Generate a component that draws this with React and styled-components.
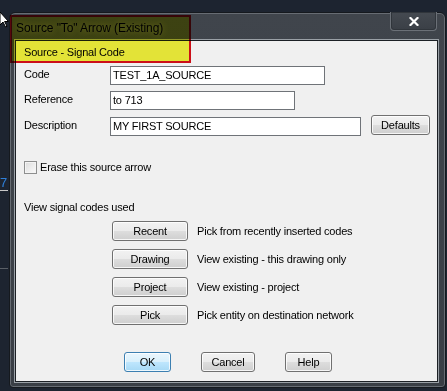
import React from 'react'
import styled, { createGlobalStyle, css } from 'styled-components'

const GlobalStyle = createGlobalStyle`
  html, body {
    margin: 0;
    padding: 0;
    background: #1d2430;
  }
  body {
    font-family: "Liberation Sans", Arial, sans-serif;
    font-size: 11px;
    letter-spacing: -0.2px;
    color: #000;
  }
`

const Page = styled.div`
  position: relative;
  width: 447px;
  height: 391px;
  overflow: hidden;
  padding: 12px 1px 0 9px;
  box-sizing: border-box;
`

const Window = styled.div`
  position: relative;
  height: 374px;
  display: flex;
  flex-direction: column;
  background: linear-gradient(#40454c, #393e45);
  border: 1px solid #15191e;
  border-radius: 6px 6px 4px 4px;
  box-shadow: inset 0 0 0 1px #676c73;
`

const TitleBar = styled.div`
  height: 27px;
  display: flex;
  align-items: flex-start;
  justify-content: space-between;
`

const Caption = styled.div`
  font-size: 12px;
  letter-spacing: -0.1px;
  padding: 8px 0 0 6px;
  text-shadow: 0 0 6px rgba(255, 255, 230, 0.35);
`

const CloseButton = styled.div`
  width: 45px;
  height: 18px;
  margin: -1px 8px 0 0;
  display: flex;
  align-items: center;
  justify-content: center;
  border: 1px solid #6b7077;
  border-top: 0;
  border-radius: 0 0 4px 4px;
  background: linear-gradient(#454a51, #3a3f46);
  box-shadow: inset 0 0 0 1px #30353b;
`

const Client = styled.div`
  flex: 1;
  margin: 0 7px 5px 5px;
  background: #f0f0f0;
  border: 1px solid #1c2025;
  box-shadow: 0 0 0 1px #9aa0a6;
  display: flex;
  flex-direction: column;
  padding: 5px 0 0 8px;
`

const SectionTitle = styled.div`
  line-height: 13px;
  height: 13px;
`

const Form = styled.div`
  display: grid;
  grid-template-columns: 86px auto;
  grid-template-rows: 25px 26px 19px;
  margin-top: 7px;
`

const Label = styled.div`
  line-height: 13px;
  padding-top: 2px;
`

const FieldRow = styled.div`
  display: flex;
  align-items: flex-start;
`

const TextBox = styled.div`
  box-sizing: border-box;
  width: ${p => p.$w}px;
  height: 19px;
  background: #fff;
  border: 1px solid #6f7378;
  padding: 2px 0 0 2px;
  line-height: 13px;
  white-space: nowrap;
`

const Button = styled.div`
  box-sizing: border-box;
  width: ${p => p.$w}px;
  height: 20px;
  display: flex;
  align-items: center;
  justify-content: center;
  border: 1px solid #707070;
  border-radius: 3px;
  background: linear-gradient(#f2f2f2 0%, #ebebeb 48%, #dddddd 52%, #cfcfcf 100%);
  box-shadow: inset 0 0 0 1px rgba(255, 255, 255, 0.8);
  padding-bottom: 1px;
  ${p => p.$default && css`
    border-color: #3c7fb1;
    background: linear-gradient(#eaf6fd 0%, #d9f0fc 48%, #bee6fd 52%, #a7d9f5 100%);
  `}
`

const DefaultsButton = styled(Button)`
  margin: -2px 0 0 10px;
`

const CheckRow = styled.label`
  display: flex;
  align-items: center;
  gap: 3px;
  margin-top: 25px;
  height: 13px;
  line-height: 13px;
`

const CheckBox = styled.span`
  box-sizing: border-box;
  width: 13px;
  height: 13px;
  border: 1px solid #8e8f8f;
  background: linear-gradient(135deg, #dcdcdc, #fbfbfb);
  box-shadow: inset 0 0 0 1px #f4f4f4;
`

const GroupLabel = styled.div`
  margin-top: 27px;
  line-height: 13px;
`

const SourceList = styled.div`
  display: flex;
  flex-direction: column;
  gap: 8px;
  margin: 7px 0 0 88px;
`

const SourceRow = styled.div`
  display: flex;
  align-items: center;
  gap: 9px;
`

const Footer = styled.div`
  display: flex;
  gap: 30px;
  margin: 27px 0 0 100px;
`

const Highlight = styled.div`
  position: absolute;
  left: 0;
  top: 2px;
  width: 181px;
  height: 48px;
  box-sizing: border-box;
  border: 2px solid #d9101a;
  background: #f2f23a;
  mix-blend-mode: multiply;
  pointer-events: none;
`

const Cursor = styled.svg`
  position: absolute;
  left: -1px;
  top: 11px;
`

const BgMark = styled.div`
  position: absolute;
  left: 0;
  top: ${p => p.$top}px;
  width: 8px;
  height: 1px;
  background: ${p => p.$color};
`

const BgDigit = styled.div`
  position: absolute;
  left: 0;
  top: 176px;
  color: #2f7fd8;
  font-size: 13px;
  line-height: 14px;
`

const sources = [
  ['Recent', 'Pick from recently inserted codes'],
  ['Drawing', 'View existing - this drawing only'],
  ['Project', 'View existing - project'],
  ['Pick', 'Pick entity on destination network'],
]

export default function App() {
  return (
    <Page>
      <GlobalStyle />
      <BgDigit>7</BgDigit>
      <BgMark $top={190} $color="#c8c8c8" />
      <BgMark $top={268} $color="#5a5f66" />
      <Window>
        <TitleBar>
          <Caption>Source "To" Arrow (Existing)</Caption>
          <CloseButton>
            <svg width="10" height="9" viewBox="0 0 10 9">
              <path d="M1.5 1 L8.5 8 M8.5 1 L1.5 8" stroke="#fff" strokeWidth="2.2" strokeLinecap="square" />
            </svg>
          </CloseButton>
        </TitleBar>
        <Client>
          <SectionTitle>Source - Signal Code</SectionTitle>
          <Form>
            <Label>Code</Label>
            <FieldRow><TextBox $w={215}>TEST_1A_SOURCE</TextBox></FieldRow>
            <Label>Reference</Label>
            <FieldRow><TextBox $w={185}>to 713</TextBox></FieldRow>
            <Label>Description</Label>
            <FieldRow>
              <TextBox $w={251}>MY FIRST SOURCE</TextBox>
              <DefaultsButton $w={59}>Defaults</DefaultsButton>
            </FieldRow>
          </Form>
          <CheckRow>
            <CheckBox />
            Erase this source arrow
          </CheckRow>
          <GroupLabel>View signal codes used</GroupLabel>
          <SourceList>
            {sources.map(([name, text]) => (
              <SourceRow key={name}>
                <Button $w={76}>{name}</Button>
                <span>{text}</span>
              </SourceRow>
            ))}
          </SourceList>
          <Footer>
            <Button $w={47} $default>OK</Button>
            <Button $w={54}>Cancel</Button>
            <Button $w={47}>Help</Button>
          </Footer>
        </Client>
        <Highlight />
      </Window>
      <Cursor width="10" height="17" viewBox="0 0 10 17">
        <path d="M1 1 L1 14 L4 11 L6.5 16 L8 15.3 L5.6 10.5 L9.5 10.5 Z" fill="#fff" stroke="#000" strokeWidth="1" />
      </Cursor>
    </Page>
  )
}
